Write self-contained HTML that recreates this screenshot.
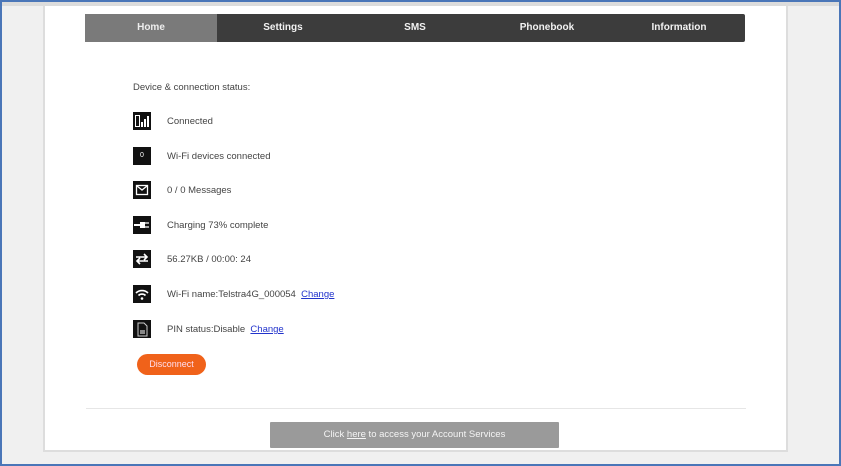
<!DOCTYPE html>
<html><head><style>
*{margin:0;padding:0;box-sizing:border-box}
body{width:841px;height:466px;background:#f0f0f0;position:relative;overflow:hidden;font-family:"Liberation Sans",sans-serif;}
.frame{position:absolute;left:0;top:0;width:841px;height:466px;border:2px solid #4a76b8;}
.strip{position:absolute;left:0;top:2px;width:841px;height:4px;background:#dcdcdc}
.panel{position:absolute;left:43px;top:6px;width:745px;height:446px;background:#fff;border-left:2px solid #ddd;border-right:2px solid #ddd;border-bottom:2px solid #ddd}
.nav{position:absolute;left:85px;top:14px;width:660px;height:28px;background:#3c3c3c;border-radius:2px;display:flex}
.nav div{flex:1;color:#f2f2f2;font-size:10px;font-weight:bold;text-align:center;line-height:28px}
.nav div.on{background:#7a7a7a;color:#eee}
.t{position:absolute;font-size:9.5px;color:#444}
.ic{position:absolute;left:133px;width:18px;height:18px;background:#111}
a{color:#2233cc;text-decoration:underline}
.btn{position:absolute;left:137px;top:354px;width:69px;height:21px;background:#f0621a;border-radius:11px;color:#fde;font-size:9px;text-align:center;line-height:21px}
.hr{position:absolute;left:86px;top:408px;width:660px;height:1px;background:#e6e6e6}
.acc{position:absolute;left:270px;top:422px;width:289px;height:26px;background:#9a9a9a;color:#f4f4f4;font-size:9.5px;text-align:center;line-height:26px;border-radius:1px}
</style></head><body>
<div class="strip"></div>
<div class="panel"></div>
<div class="nav"><div class="on">Home</div><div>Settings</div><div>SMS</div><div>Phonebook</div><div>Information</div></div>
<div class="t" style="left:133px;top:82px">Device &amp; connection status:</div>

<div class="ic" style="top:112px"><svg width="18" height="18"><rect x="2" y="3" width="5" height="12" fill="#fff"/><rect x="3" y="4" width="3" height="10" fill="#111"/><rect x="8" y="10" width="2" height="5" fill="#fff"/><rect x="11" y="7" width="2" height="8" fill="#fff"/><rect x="14" y="4" width="2" height="11" fill="#fff"/></svg></div>
<div class="t" style="left:167px;top:116px">Connected</div>

<div class="ic" style="top:147px;color:#fff;font-size:7px;text-align:center;line-height:18px">0</div>
<div class="t" style="left:167px;top:151px">Wi-Fi devices connected</div>

<div class="ic" style="top:181px"><svg width="18" height="18"><rect x="3.5" y="4.5" width="11" height="9" fill="none" stroke="#fff" stroke-width="1.3"/><path d="M4 5l5 4 5-4" fill="none" stroke="#fff" stroke-width="1.3"/></svg></div>
<div class="t" style="left:167px;top:185px">0 / 0 Messages</div>

<div class="ic" style="top:216px"><svg width="18" height="18"><path d="M1 9h6" stroke="#fff" stroke-width="2"/><rect x="7" y="6" width="5" height="6" fill="#fff"/><path d="M12 7h4M12 11h4" stroke="#fff" stroke-width="1.3"/></svg></div>
<div class="t" style="left:167px;top:220px">Charging 73% complete</div>

<div class="ic" style="top:250px"><svg width="18" height="18"><path d="M3 7h11M11 4l3 3-3 3M15 11H4M7 8l-3 3 3 3" fill="none" stroke="#fff" stroke-width="1.6"/></svg></div>
<div class="t" style="left:167px;top:254px">56.27KB / 00:00: 24</div>

<div class="ic" style="top:285px"><svg width="18" height="18"><path d="M3 8a8.5 8.5 0 0 1 12 0M5.5 10.5a5 5 0 0 1 7 0" fill="none" stroke="#fff" stroke-width="1.6"/><circle cx="9" cy="13.5" r="1.3" fill="#fff"/></svg></div>
<div class="t" style="left:167px;top:289px">Wi-Fi name:Telstra4G_000054 &nbsp;<a>Change</a></div>

<div class="ic" style="top:320px"><svg width="18" height="18"><path d="M5 3h6l3 3v10H5z" fill="none" stroke="#ccc" stroke-width="1"/><rect x="7" y="10" width="5" height="4" fill="#888"/></svg></div>
<div class="t" style="left:167px;top:324px">PIN status:Disable &nbsp;<a>Change</a></div>

<div class="btn">Disconnect</div>
<div class="hr"></div>
<div class="acc">Click <u>here</u> to access your Account Services</div>
<div class="frame"></div>
</body></html>
